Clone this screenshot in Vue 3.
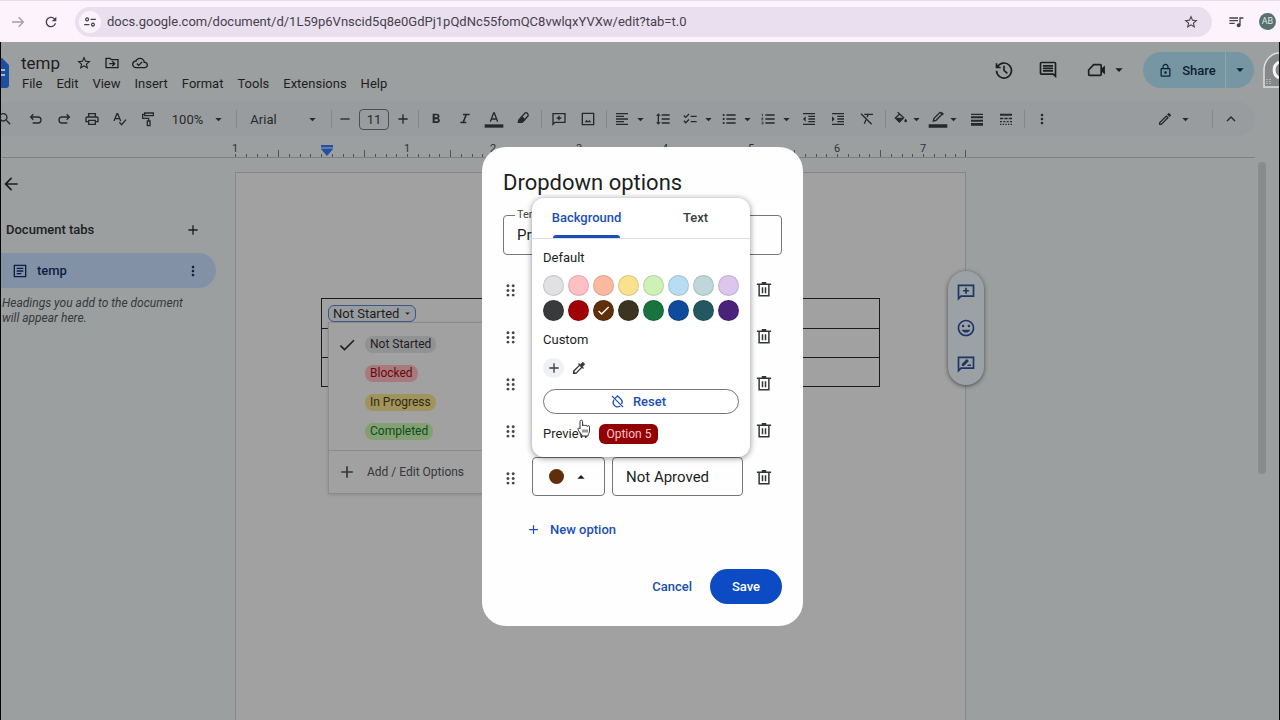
<script setup>
import { h, ref } from 'vue'

// solid shapes, 24x24 grid
const fills = {
  add: 'M19 13h-6v6h-2v-6H5v-2h6V5h2v6h6v2z',
  remove: 'M19 13H5v-2h14v2z',
  back: 'M20 11H7.83l5.59-5.59L12 4l-8 8 8 8 1.41-1.41L7.83 13H20v-2z',
  check: 'M9 16.17L4.83 12l-1.42 1.41L9 19 21 7l-1.41-1.41z',
  down: 'M1 7l11 11L23 7z',
  up: 'M1 17L12 6l11 11z',
  more: 'M12 8c1.1 0 2-.9 2-2s-.9-2-2-2-2 .9-2 2 .9 2 2 2zm0 2c-1.1 0-2 .9-2 2s.9 2 2 2 2-.9 2-2-.9-2-2-2zm0 6c-1.1 0-2 .9-2 2s.9 2 2 2 2-.9 2-2-.9-2-2-2z',
  search: 'M15.5 14h-.79l-.28-.27C15.41 12.59 16 11.11 16 9.5 16 5.91 13.09 3 9.5 3S3 5.91 3 9.5 5.91 16 9.5 16c1.61 0 3.09-.59 4.23-1.57l.27.28v.79l5 4.99L20.49 19l-4.99-5zm-6 0C7.01 14 5 11.99 5 9.5S7.01 5 9.5 5 14 7.01 14 9.5 11.99 14 9.5 14z',
  print: 'M19 8h-1V3H6v5H5c-1.66 0-3 1.34-3 3v6h4v4h12v-4h4v-6c0-1.66-1.34-3-3-3zM8 5h8v3H8V5zm8 12v2H8v-4h8v2zm2-2v-2H6v2H4v-4c0-.55.45-1 1-1h14c.55 0 1 .45 1 1v4h-2z',
  star: 'M22 9.24l-7.19-.62L12 2 9.19 8.63 2 9.24l5.46 4.73L5.82 21 12 17.27 18.18 21l-1.63-7.03L22 9.24zM12 15.4l-3.76 2.27 1-4.28-3.32-2.88 4.38-.38L12 6.1l1.71 4.04 4.38.38-3.32 2.88 1 4.28L12 15.4z',
  cloud: 'M19.35 10.04C18.67 6.59 15.64 4 12 4 9.11 4 6.6 5.64 5.35 8.04 2.34 8.36 0 10.91 0 14c0 3.31 2.69 6 6 6h13c2.76 0 5-2.24 5-5 0-2.64-2.05-4.78-4.65-4.96zM19 18H6c-2.21 0-4-1.79-4-4s1.79-4 4-4h.71C7.37 7.69 9.48 6 12 6c3.04 0 5.5 2.46 5.5 5.5v.5H19c1.66 0 3 1.34 3 3s-1.34 3-3 3zm-9-3.82l-2.09-2.09L6.5 13.5 10 17l6.01-6.01-1.41-1.41z',
  comment: 'M21.99 4c0-1.1-.89-2-1.99-2H4c-1.1 0-2 .9-2 2v12c0 1.1.9 2 2 2h14l4 4-.01-18zM20 4v13.17L18.83 16H4V4h16zM6 12h12v2H6zm0-3h12v2H6zm0-3h12v2H6z',
  camera: 'M17 10.5l4.5-4v11l-4.5-4z',
  lock: 'M18 8h-1V6c0-2.76-2.24-5-5-5S7 3.24 7 6v2H6c-1.1 0-2 .9-2 2v10c0 1.1.9 2 2 2h12c1.1 0 2-.9 2-2V10c0-1.1-.9-2-2-2zM9 6c0-1.66 1.34-3 3-3s3 1.34 3 3v2H9V6zm9 14H6V10h12v10zm-6-3c1.1 0 2-.9 2-2s-.9-2-2-2-2 .9-2 2 .9 2 2 2z',
  image: 'M7 17l3-4 2.2 2.6L14 13.5l3 3.5z',
  align: 'M15 15H3v2h12v-2zm0-8H3v2h12V7zM3 13h18v-2H3v2zm0 8h18v-2H3v2zM3 3v2h18V3H3z',
  spacing: 'M6 7h2.5L5 3.5 1.5 7H4v10H1.5L5 20.5 8.5 17H6V7zm4-2v2h12V5H10zm0 14h12v-2H10v2zm0-6h12v-2H10v2z',
  checklist: 'M22 7h-9v2h9V7zm0 8h-9v2h9v-2zM5.54 11L2 7.46l1.41-1.41 2.12 2.12 4.24-4.24 1.41 1.41L5.54 11zm0 8L2 15.46l1.41-1.41 2.12 2.12 4.24-4.24 1.41 1.41L5.54 19z',
  bullets: 'M4 10.5c-.83 0-1.5.67-1.5 1.5s.67 1.5 1.5 1.5 1.5-.67 1.5-1.5-.67-1.5-1.5-1.5zm0-6c-.83 0-1.5.67-1.5 1.5S3.17 7.5 4 7.5 5.5 6.83 5.5 6 4.83 4.5 4 4.5zm0 12c-.83 0-1.5.68-1.5 1.5s.68 1.5 1.5 1.5 1.5-.68 1.5-1.5-.67-1.5-1.5-1.5zM8 19h14v-2H8v2zm0-6h14v-2H8v2zm0-8v2h14V5H8z',
  numbers: 'M2 17h2v.5H3v1h1v.5H2v1h3v-4H2v1zm1-9h1V4H2v1h1v3zm-1 3h1.8L2 13.1v.9h3v-1H3.2L5 10.9V10H2v1zm6-6v2h14V5H8zm0 14h14v-2H8v2zm0-6h14v-2H8v2z',
  outdent: 'M11 17h10v-2H11v2zm-8-5l4 4V8l-4 4zm0 9h18v-2H3v2zM3 3v2h18V3H3zm8 6h10V7H11v2zm0 4h10v-2H11v2z',
  indent: 'M3 21h18v-2H3v2zM3 8v8l4-4-4-4zm8 9h10v-2H11v2zM3 3v2h18V3H3zm8 6h10V7H11v2zm0 4h10v-2H11v2z',
  bold: 'M15.6 10.79c.97-.67 1.65-1.77 1.65-2.79 0-2.26-1.75-4-4-4H7v14h7.04c2.09 0 3.71-1.7 3.71-3.79 0-1.52-.86-2.82-2.15-3.42zM10 6.5h3c.83 0 1.5.67 1.5 1.5s-.67 1.5-1.5 1.5h-3v-3zm3.5 9H10v-3h3.5c.83 0 1.5.67 1.5 1.5s-.67 1.5-1.5 1.5z',
  italic: 'M9 4v2.5h3.2L8.3 16H5v2.5h9V16h-3.1l3.9-9.5H19V4z',
  textColor: 'M-2 20h28v5H-2z',
  marker: 'M11 8l5 5-5.500 5H5.500L5 15z',
  fill: 'M5.2 10L5 12l4 4h2l4-6zM19 11.5s-2 2.170-2 3.500a2 2 0 0 0 4 0c0-1.330-2-3.500-2-3.500z',
  border: 'M-2 20h28v5H-2zM17.500 1l3.500 3.500-2 2L15.500 3z',
  lines: 'M3 4h18v2H3zM3 8h18v3H3zM3 13h18v3H3zM3 18h18v4H3z',
  dashes: 'M3 4h18v3H3zM3 10h5v2.5H3zM9.5 10h5v2.5h-5zM16 10h5v2.5h-5zM3 15h3v2H3zM8 15h3v2H8zM13 15h3v2h-3zM18 15h3v2h-3zM3 19h2v2H3zM7 19h2v2H7zM11 19h2v2h-2zM15 19h2v2h-2zM19 19h2v2h-2z',
  edit: 'M14.06 9.02l.92.92L5.92 19H5v-.92l9.06-9.06M17.66 3c-.25 0-.51.1-.7.29l-1.83 1.83 3.75 3.75 1.83-1.83c.39-.39.39-1.02 0-1.41l-2.34-2.34c-.2-.2-.45-.29-.71-.29zm-3.6 3.19L3 17.25V21h3.75L17.81 9.94l-3.75-3.75z',
  smile: 'M11.99 2C6.47 2 2 6.48 2 12s4.47 10 9.99 10C17.52 22 22 17.52 22 12S17.52 2 11.99 2zM12 20c-4.42 0-8-3.58-8-8s3.58-8 8-8 8 3.58 8 8-3.58 8-8 8zm3.5-9c.83 0 1.5-.67 1.5-1.5S16.33 8 15.5 8 14 8.67 14 9.5s.67 1.5 1.5 1.5zm-7 0c.83 0 1.5-.67 1.5-1.5S9.33 8 8.5 8 7 8.67 7 9.5 7.67 11 8.5 11zm3.5 6.5c2.33 0 4.31-1.46 5.11-3.5H6.89c.8 2.04 2.78 3.5 5.11 3.5z',
  suggest: 'M7 14.5V12l6-6 2.5 2.5-6 6zM13 14.5l2-2h3v2z',
  reload: 'M17.65 6.35C16.2 4.9 14.21 4 12 4c-4.42 0-7.99 3.58-7.99 8s3.57 8 7.99 8c3.73 0 6.84-2.55 7.73-6h-2.08c-.82 2.33-3.04 4-5.65 4-3.31 0-6-2.69-6-6s2.69-6 6-6c1.66 0 3.14.69 4.22 1.78L13 11h7V4l-2.35 2.35z',
  queue: 'M15 5H2v2h13V5zm0 4H2v2h13V9zM2 15h8v-2H2v2zM17 5v9.18c-.31-.11-.65-.18-1-.18-1.66 0-3 1.34-3 3s1.34 3 3 3 3-1.34 3-3V7h4V5h-6z',
  dropper: 'M20.71 5.63l-2.34-2.34c-.39-.39-1.02-.39-1.41 0l-3.12 3.12-1.93-1.91-1.41 1.41 1.42 1.42L3 16.25V21h4.75l8.92-8.92 1.42 1.42 1.41-1.41-1.92-1.92 3.12-3.12c.4-.4.4-1.03.01-1.42zM6.92 19L5 17.08l8.06-8.06 1.92 1.92L6.92 19z',
  drag: 'M5 4a2.500 2.500 0 1 0 .1 0zM14 4a2.500 2.500 0 1 0 .1 0zM5 12a2.500 2.500 0 1 0 .1 0zM14 12a2.500 2.500 0 1 0 .1 0zM5 20a2.500 2.500 0 1 0 .1 0zM14 20a2.500 2.500 0 1 0 .1 0z',
}

// line shapes, 24x24 grid
const strokes = {
  forward: 'M3 12h17M13 5l7 7-7 7',
  tune: 'M7 5a2.500 2.500 0 1 0 .1 0zM13 7.500h9M17 14a2.500 2.500 0 1 0 .1 0zM2 16.500h9',
  move: 'M3 5h6l2 2h10v12H3zM8 13h7M12.500 9.500L16 13l-3.500 3.500',
  undo: 'M8 5L4 9l4 4M4.500 9H15a4.500 4.500 0 0 1 0 9H7',
  redo: 'M16 5l4 4-4 4M19.500 9H9a4.500 4.500 0 0 0 0 9h8',
  spell: 'M3 15L7.500 4h1L13 15M4.500 11.500h7M11 17l3.500 3.500L21 13',
  roller: 'M7 3h13v4H7zM7 5H4v6h9v4M11 15h4v7h-4z',
  history: 'M3 4v5h5M4 8.500A9 9 0 1 1 3 13M12 7v5.500l4 3.500',
  camera: 'M8 5.500h8a1 1 0 0 1 1 1v11a1 1 0 0 1-1 1H3a1 1 0 0 1-1-1V12z',
  addComment: 'M3 20V4h18v13H6zM12 7v7M8.500 10.500h7',
  image: 'M3.500 3.500h17v17h-17z',
  textColor: 'M6.500 16L11.500 3h1L17.500 16M8 12h8',
  marker: 'M6 13l9-10c2-2 6 2 4.500 4.500l-9 9.500H5z',
  clear: 'M3 4l16 16M8 5h13M14 5l-2 4.500M10.500 13L8 19',
  fill: 'M7 2l9 8-6.500 6.500L3.500 10.500 10 4.500',
  border: 'M5 15l1-4 9-9 3 3-9 9z',
  collapse: 'M6 15l6-6 6 6',
  suggest: 'M3 20V4h18v13H6z',
  doc: 'M3.500 3.500h17v17h-17zM7 8h10M7 12h10M7 16h7',
  trash: 'M5.500 6v15h13V6M2.500 5.500h19M9 3.500h6M10 9.500v8M14 9.500v8',
  noColor: 'M3 3l18 18M8 7l4-4 5.500 5.500c2 2 2.500 5 1 7.500M6.500 9c-3 4-1.500 10 4 11.500 2 .4 4 0 6-1.500',
}

const Icon = ({ name }) =>
  h('svg', { class: 'icon', viewBox: '0 0 24 24', 'aria-hidden': 'true' }, [
    fills[name] && h('path', { d: fills[name], fill: 'currentColor' }),
    strokes[name] && h('path', { d: strokes[name], fill: 'none', stroke: 'currentColor', 'stroke-width': 2 }),
  ])
Icon.props = ['name']

const url = ref('docs.google.com/document/d/1L59p6Vnscid5q8e0GdPj1pQdNc55fomQC8vwlqxYVXw/edit?tab=t.0')
const fontSize = ref('11')
const templateName = ref('Project status')

const menus = ['File', 'Edit', 'View', 'Insert', 'Format', 'Tools', 'Extensions', 'Help']

const statuses = [
  { label: 'Not Started', tone: 'grey' },
  { label: 'Blocked', tone: 'red' },
  { label: 'In Progress', tone: 'yellow' },
  { label: 'Completed', tone: 'green' },
]

const options = ref([
  { label: 'Not Started', color: '#e0e0e0' },
  { label: 'Blocked', color: '#ffc0c4' },
  { label: 'In Progress', color: '#f8e08c' },
  { label: 'Completed', color: '#cdf0b4' },
  { label: 'Not Aproved', color: '#5f2e0b' },
])

const swatches = [
  '#e0e1e2', '#ffc0c4', '#fcb9a0', '#f9e28e', '#cdf1b7', '#b8ddf2', '#bfd6db', '#dcc6ee',
  '#383a3c', '#a00006', '#5f2e0b', '#3b3421', '#17743e', '#0f4a9d', '#235860', '#4b2279',
]
const selected = '#5f2e0b'

// eighth-of-an-inch marks, the zero sits one inch in
const eighth = 43 / 4
const ticks = Array.from({ length: 69 }, (_, i) => ({
  x: Math.min(Math.round(i * eighth), 730),
  tall: i % 8 === 4,
  label: i % 8 === 0 && i !== 8 ? Math.abs(i / 8 - 1) : '',
}))
</script>

<template>
  <div class="window">
    <div class="browser">
      <button class="nav faint" aria-label="Forward"><Icon name="forward" /></button>
      <button class="nav" aria-label="Reload"><Icon name="reload" /></button>
      <div class="omnibox">
        <button class="site" aria-label="Site information"><Icon name="tune" /></button>
        <input v-model="url" class="url" aria-label="Address" />
        <button class="nav" aria-label="Bookmark"><Icon name="star" /></button>
      </div>
      <button class="nav" aria-label="Media"><Icon name="queue" /></button>
      <span class="avatar">AB</span>
    </div>

    <div class="docs">
      <header class="header">
        <svg class="logo" viewBox="0 0 8 30"><path d="M0 0h1l7 7v20a3 3 0 0 1-3 3H0z" fill="#1c4f9e" /><path d="M0 12h4M0 17h4" stroke="#a9b9d3" stroke-width="2" /></svg>
        <div class="naming">
          <div class="title-row">
            <span class="doc-name">temp</span>
            <button aria-label="Star"><Icon name="star" /></button>
            <button aria-label="Move"><Icon name="move" /></button>
            <button aria-label="Saved to Drive"><Icon name="cloud" /></button>
          </div>
          <nav class="menus">
            <button v-for="m in menus" :key="m">{{ m }}</button>
          </nav>
        </div>
        <div class="header-actions">
          <button aria-label="History"><Icon name="history" /></button>
          <button aria-label="Comments"><Icon name="comment" /></button>
          <button class="meet" aria-label="Meet"><Icon name="camera" /><Icon name="down" class="caret" /></button>
          <div class="share">
            <button class="share-main"><Icon name="lock" />Share</button>
            <button class="share-more" aria-label="Share options"><Icon name="down" class="caret" /></button>
          </div>
          <svg class="widget" viewBox="0 0 16 36"><path d="M16 1C8 1 1 9 1 18v17h15" fill="#858788" stroke="#dfe0e0" stroke-width="1.500" /><path d="M16 10a9 9 0 0 0 0 16" fill="none" stroke="#f4f4f4" stroke-width="3" /><path d="M4 27v5M7 27v5" stroke="#dfe0e0" stroke-dasharray="1 1" /></svg>
        </div>
      </header>

      <div class="toolbar" role="toolbar">
        <button class="search" aria-label="Search"><Icon name="search" /></button>
        <div class="group compact">
          <button v-for="n in ['undo', 'redo', 'print', 'spell', 'roller']" :key="n" :aria-label="n"><Icon :name="n" /></button>
        </div>
        <button class="zoom-level">100%<Icon name="down" class="caret" /></button>
        <i class="sep"></i>
        <button class="font-name">Arial<Icon name="down" class="caret" /></button>
        <i class="sep"></i>
        <button class="step" aria-label="Smaller"><Icon name="remove" /></button>
        <input v-model="fontSize" class="font-size" aria-label="Font size" />
        <button class="step" aria-label="Larger"><Icon name="add" /></button>
        <i class="sep"></i>
        <div class="group">
          <button v-for="n in ['bold', 'italic', 'textColor', 'marker']" :key="n" :aria-label="n"><Icon :name="n" /></button>
        </div>
        <i class="sep"></i>
        <div class="group">
          <button v-for="n in ['addComment', 'image']" :key="n" :aria-label="n"><Icon :name="n" /></button>
        </div>
        <i class="sep"></i>
        <div class="group">
          <button class="combo" aria-label="Align"><Icon name="align" /><Icon name="down" class="caret" /></button>
          <button aria-label="Line spacing"><Icon name="spacing" /></button>
          <button v-for="n in ['checklist', 'bullets', 'numbers']" :key="n" class="combo" :aria-label="n"><Icon :name="n" /><Icon name="down" class="caret" /></button>
          <button v-for="n in ['outdent', 'indent', 'clear']" :key="n" :aria-label="n"><Icon :name="n" /></button>
        </div>
        <i class="sep"></i>
        <div class="group">
          <button v-for="n in ['fill', 'border']" :key="n" class="combo tight" :aria-label="n"><Icon :name="n" /><Icon name="down" class="caret" /></button>
          <button v-for="n in ['lines', 'dashes']" :key="n" :aria-label="n"><Icon :name="n" /></button>
        </div>
        <i class="sep"></i>
        <div class="group">
          <button aria-label="More"><Icon name="more" /></button>
        </div>
        <button class="mode" aria-label="Editing mode"><Icon name="edit" /><Icon name="down" class="caret" /></button>
        <i class="sep"></i>
        <button class="collapse" aria-label="Hide the menus"><Icon name="collapse" /></button>
      </div>

      <div class="ruler">
        <svg class="scale" viewBox="0 0 731 22">
          <g v-for="t in ticks" :key="t.x">
            <rect :x="t.x" :y="t.tall ? 14 : 18" width="1" :height="t.tall ? 7 : 3" fill="#515455" />
            <text v-if="t.label" :x="t.x" y="16" text-anchor="middle">{{ t.label }}</text>
          </g>
          <path d="M86 9h12v4l-6 7-6-7z" fill="#2250a3" />
          <path d="M86 12h12" stroke="#a0a5b0" />
        </svg>
      </div>

      <div class="workspace">
        <aside class="sidebar">
          <button class="back" aria-label="Close tabs"><Icon name="back" /></button>
          <div class="tabs-head">
            <h2>Document tabs</h2>
            <button aria-label="Add tab"><Icon name="add" /></button>
          </div>
          <div class="tab">
            <Icon name="doc" />
            <span>temp</span>
            <button aria-label="Tab options"><Icon name="more" /></button>
          </div>
          <p>Headings you add to the document will appear here.</p>
        </aside>

        <main class="canvas">
          <div class="paper">
            <table class="grid">
              <tbody>
                <tr>
                  <td>
                    <div class="anchor">
                      <button class="chip">Not Started<Icon name="down" class="caret" /></button>
                      <div class="menu">
                        <ul>
                          <li v-for="(s, i) in statuses" :key="s.label">
                            <span class="mark"><Icon v-if="i === 0" name="check" /></span>
                            <span class="pill" :class="s.tone">{{ s.label }}</span>
                          </li>
                        </ul>
                        <button class="edit-options"><Icon name="add" />Add / Edit Options</button>
                      </div>
                    </div>
                  </td>
                </tr>
                <tr><td></td></tr>
                <tr><td></td></tr>
              </tbody>
            </table>
            <div class="quick">
              <button aria-label="Add comment"><Icon name="addComment" /></button>
              <button aria-label="Add emoji"><Icon name="smile" /></button>
              <button aria-label="Suggest edits"><Icon name="suggest" /></button>
            </div>
          </div>
          <span class="thumb"></span>
        </main>
      </div>
    </div>

    <div class="overlay">
      <form class="dialog" role="dialog" aria-label="Dropdown options" @submit.prevent>
        <h1>Dropdown options</h1>
        <fieldset class="field">
          <legend><label for="template">Template</label></legend>
          <input id="template" v-model="templateName" />
        </fieldset>

        <div class="options">
          <div v-for="(o, i) in options" :key="i" class="option">
            <Icon name="drag" class="drag" />
            <button type="button" class="color" aria-label="Color">
              <span class="dot" :style="{ background: o.color }"></span>
              <Icon name="up" class="caret" />
            </button>
            <input v-model="o.label" :aria-label="'Option ' + (i + 1)" />
            <button type="button" class="trash" aria-label="Delete option"><Icon name="trash" /></button>
          </div>
        </div>

        <button type="button" class="new-option"><Icon name="add" />New option</button>
        <div class="actions">
          <button type="button" class="cancel">Cancel</button>
          <button class="save">Save</button>
        </div>

        <div class="popup">
          <div class="popup-tabs">
            <button type="button" class="active">Background</button>
            <button type="button">Text</button>
          </div>
          <div class="popup-body">
            <h3>Default</h3>
            <div class="swatches">
              <button v-for="c in swatches" :key="c" type="button" :aria-label="c" :style="{ background: c }">
                <Icon v-if="c === selected" name="check" />
              </button>
            </div>
            <h3 class="custom-title">Custom</h3>
            <div class="custom">
              <button type="button" class="plus" aria-label="Custom color"><Icon name="add" /></button>
              <button type="button" aria-label="Pick a color"><Icon name="dropper" /></button>
            </div>
            <button type="button" class="reset"><Icon name="noColor" />Reset</button>
            <div class="preview">
              <h3>Preview</h3>
              <span>Option 5</span>
            </div>
          </div>
          <svg class="pointer" viewBox="0 0 14 18"><path d="M3 10V2.500a1.300 1.300 0 0 1 2.600 0V7a1.200 1.200 0 0 1 2.300 0 1.200 1.200 0 0 1 2.300.5 1.200 1.200 0 0 1 2.300.7V12c0 2-1.500 3-1.500 5H5c0-2-3-4-4-6.500C.5 9 2 8.500 3 10zM6 10.500v3M8 10.500v3M10 10.500v3" fill="#fff" stroke="#333" /></svg>
        </div>
      </form>
    </div>
  </div>
</template>

<style>
body {
  margin: 0;
  background: #9c9fa0;
}
</style>

<style scoped>
.window {
  position: relative;
  display: flex;
  flex-direction: column;
  min-height: 100vh;
  overflow: hidden;
  font-family: Roboto, 'Liberation Sans', sans-serif;
  font-size: 13px;
  color: #1c1e20;
}

* {
  box-sizing: border-box;
}

button,
input {
  font: inherit;
  color: inherit;
  border: 0;
  padding: 0;
  background: none;
}

button {
  display: flex;
  align-items: center;
  justify-content: center;
}

h1, h2, h3, p, ul {
  margin: 0;
  padding: 0;
  font-weight: 400;
}

.icon {
  width: 18px;
  height: 18px;
  flex: none;
  overflow: visible;
}

.icon.caret {
  width: 8px;
  height: 8px;
}

/* browser bar */
.browser {
  display: flex;
  align-items: center;
  height: 42px;
  padding: 0 4px;
  background: #fdf3fd;
  border-top: 1px solid #e6dcea;
  color: #46424b;
}

.nav {
  width: 28px;
}

.nav .icon {
  width: 16px;
  height: 16px;
}

.browser > .nav {
  margin-right: 5px;
}

.faint {
  color: #a49ea8;
}

.omnibox {
  display: flex;
  align-items: center;
  flex: 1;
  height: 30px;
  margin: 0 10px 0 5px;
  padding: 0 7px 0 4px;
  border-radius: 15px;
  background: #e9dfee;
}

.site {
  width: 22px;
  height: 22px;
  margin-right: 6px;
  border-radius: 11px;
  background: #fbf3fc;
}

.site .icon {
  width: 14px;
  height: 14px;
}

.url {
  flex: 1;
}

.avatar {
  width: 17px;
  height: 17px;
  margin: 0 0 0 4px;
  border-radius: 9px;
  background: #58706f;
  color: #dfe9e8;
  font-size: 9px;
  line-height: 17px;
  text-align: center;
}

/* editor chrome */
.docs {
  display: flex;
  flex-direction: column;
  flex: 1;
  background: #9c9fa0;
  border: solid #050505;
  border-width: 0 1px;
}

.header {
  display: flex;
  height: 60px;
}

.logo {
  width: 8px;
  height: 30px;
  margin-top: 16px;
}

.naming {
  padding: 11px 0 0 12px;
}

.title-row {
  display: flex;
  align-items: center;
  gap: 12px;
  height: 20px;
}

.title-row .icon {
  width: 16px;
  height: 16px;
}

.doc-name {
  margin-right: 4px;
  font-size: 17px;
  line-height: 20px;
}

.menus {
  display: flex;
  gap: 14px;
  margin-top: 1px;
  padding-left: 1px;
}

.menus button {
  height: 18px;
}

.header-actions {
  display: flex;
  align-items: center;
  height: 36px;
  margin: 10px 0 0 auto;
}

.header-actions > button {
  width: 44px;
}

.header-actions .icon {
  width: 20px;
  height: 20px;
}

.header-actions .icon.caret {
  width: 8px;
  height: 8px;
}

.header-actions > .meet {
  width: 60px;
  gap: 8px;
  padding-left: 10px;
}

.share {
  display: flex;
  height: 36px;
  margin: 0 9px 0 13px;
  border-radius: 18px;
  background: #7796a4;
  color: #0b2232;
  overflow: hidden;
}

.share-main {
  width: 82px;
  gap: 9px;
  padding-left: 6px;
  font-weight: 500;
}

.share-main .icon {
  width: 15px;
  height: 15px;
}

.share-more {
  width: 29px;
  border-left: 1px solid #8fa5af;
}

.widget {
  width: 16px;
  height: 36px;
}

.toolbar {
  display: flex;
  align-items: center;
  height: 34px;
  margin-right: 24px;
  border-radius: 0 17px 17px 0;
  background: #999c9e;
  color: #26292b;
}

.toolbar button {
  height: 28px;
  flex: none;
}

.toolbar .icon {
  width: 16px;
  height: 16px;
}

.toolbar .icon.caret {
  width: 7px;
  height: 7px;
}

.search {
  width: 21px;
  justify-content: flex-end;
  padding-right: 9px;
}

.group {
  display: flex;
}

.group button {
  width: 29px;
}

.compact button {
  width: 28px;
}

.group .combo {
  width: 39px;
  gap: 7px;
}

.group .tight {
  width: 37px;
  gap: 4px;
}

.zoom-level {
  width: 70px;
  gap: 12px;
}

.font-name {
  width: 88px;
  gap: 32px;
}

.sep {
  width: 1px;
  height: 18px;
  margin: 0 2px 0 4px;
  background: #85888a;
}

.step {
  width: 22px;
}

.font-size {
  width: 30px;
  height: 21px;
  margin: 0 3px;
  border: 1px solid #4d5051;
  border-radius: 4px;
  text-align: center;
}

.mode {
  width: 52px;
  gap: 9px;
  margin-left: auto;
}

.mode + .sep {
  margin: 0 4px 0 13px;
}

.collapse {
  width: 28px;
  margin-right: 10px;
}

.ruler {
  height: 22px;
  margin-right: 24px;
  padding-left: 234px;
  border-bottom: 1px solid #7f8283;
}

.scale {
  display: block;
  width: 731px;
  height: 22px;
  overflow: visible;
  font-size: 11px;
  fill: #303234;
}

/* document area */
.workspace {
  display: flex;
  flex: 1;
}

.sidebar {
  width: 234px;
  flex: none;
  padding-top: 16px;
}

.back .icon {
  width: 20px;
  height: 20px;
}

.tabs-head {
  display: flex;
  align-items: center;
  justify-content: space-between;
  margin-top: 26px;
  padding: 0 34px 0 5px;
}

.tabs-head h2 {
  font-size: 13px;
  line-height: 20px;
  font-weight: 500;
}

.tabs-head .icon,
.tab .icon {
  width: 16px;
  height: 16px;
}

.tab {
  display: flex;
  align-items: center;
  height: 35px;
  margin: 13px 19px 0 0;
  padding: 0 15px 0 11px;
  border-radius: 0 18px 18px 0;
  background: #8391a7;
  color: #0b1f44;
  font-weight: 500;
}

.tab span {
  flex: 1;
  padding-left: 9px;
}

.sidebar p {
  padding: 8px 48px 0 1px;
  font-size: 12px;
  line-height: 15px;
  font-style: italic;
  color: #35393b;
}

.canvas {
  display: flex;
  flex: 1;
  justify-content: space-between;
  padding: 4px 13px 0 0;
}

.paper {
  position: relative;
  width: 731px;
  margin-top: 10px;
  padding: 125px 85px 0;
  border: 1px solid #858788;
  border-bottom: 0;
  background: #a1a1a1;
}

.thumb {
  width: 8px;
  height: 312px;
  border-radius: 4px;
  background: #898c8d;
}

.grid {
  width: 100%;
  border-collapse: collapse;
}

.grid td {
  height: 29px;
  padding: 0 6px;
  border: 1px solid #1b1b1b;
}

.grid tr:first-child td {
  height: 30px;
}

.anchor {
  position: relative;
  width: max-content;
}

.chip {
  height: 17px;
  gap: 6px;
  padding: 0 5px 0 4px;
  border: 1px solid #3c5788;
  border-radius: 6px;
  background: #989b9f;
}

.chip .icon.caret {
  width: 5px;
  height: 5px;
}

.menu {
  position: absolute;
  top: 17px;
  left: 0;
  width: 220px;
  border: 1px solid #8c8c8c;
  background: #a1a1a1;
  box-shadow: 0 1px 3px #77777780;
  font-size: 12px;
}

.menu ul {
  padding: 7px 0 4px;
  list-style: none;
}

.menu li {
  display: flex;
  align-items: center;
  height: 29px;
}

.mark {
  display: flex;
  width: 36px;
  padding-left: 8px;
}

.mark .icon {
  width: 20px;
  height: 20px;
}

.pill {
  height: 17px;
  padding: 0 5px;
  border-radius: 8px;
  line-height: 17px;
}

.grey {
  background: #919293;
}

.red {
  background: #a77a7c;
  color: #6d0510;
}

.yellow {
  background: #a1935c;
  color: #30290f;
}

.green {
  background: #83a072;
  color: #0e4a20;
}

.edit-options {
  width: 100%;
  height: 43px;
  justify-content: flex-start;
  gap: 10px;
  padding-left: 8px;
  border-top: 1px solid #8c8c8c;
  color: #34373a;
}

.edit-options .icon {
  width: 20px;
  height: 20px;
}

.quick {
  position: absolute;
  top: 98px;
  right: -19px;
  display: flex;
  flex-direction: column;
  justify-content: space-around;
  width: 36px;
  height: 114px;
  padding: 3px 0;
  border-radius: 18px;
  background: #9ba1a5;
  box-shadow: 0 1px 4px #4a4c4e;
  color: #1d3565;
}

.quick .icon {
  width: 20px;
  height: 20px;
}

/* dialog */
.overlay {
  position: absolute;
  inset: 0;
  display: flex;
  align-items: center;
  justify-content: center;
  padding: 53px 0 0 5px;
}

.dialog {
  position: relative;
  width: 321px;
  padding: 22px 21px;
  border-radius: 24px;
  background: #fefefe;
}

.dialog h1 {
  padding-top: 1px;
  font-size: 22px;
  line-height: 26px;
}

.field {
  height: 46px;
  min-width: 0;
  margin: 13px 0 0;
  padding: 0 13px;
  border: 1px solid #747775;
  border-radius: 4px;
}

.field legend {
  padding: 0 2px;
  margin-left: -2px;
  font-size: 11px;
  line-height: 12px;
  color: #444746;
}

.field input {
  width: 100%;
  height: 28px;
  font-size: 15px;
}

.options {
  display: flex;
  flex-direction: column;
  gap: 8px;
  margin-top: 14px;
}

.option {
  display: flex;
  align-items: center;
  height: 39px;
}

.icon.drag {
  width: 14px;
  height: 14px;
  margin: 0 13px 0 2px;
  color: #444746;
}

.color {
  width: 73px;
  height: 39px;
  gap: 13px;
  padding-right: 3px;
  border: 1px solid #747775;
  border-radius: 4px;
}

.dot {
  width: 15px;
  height: 15px;
  border-radius: 8px;
}

.option input {
  width: 131px;
  height: 39px;
  margin-left: 7px;
  padding: 0 13px;
  border: 1px solid #747775;
  border-radius: 4px;
  font-size: 15px;
}

.trash {
  margin-left: 12px;
  color: #333635;
}

.new-option {
  height: 32px;
  gap: 9px;
  margin: 17px 0 0 23px;
  color: #1c50b4;
  font-weight: 500;
}

.new-option .icon {
  width: 15px;
  height: 15px;
}

.actions {
  display: flex;
  justify-content: flex-end;
  gap: 18px;
  margin-top: 24px;
  font-weight: 500;
}

.cancel {
  color: #1c4fa6;
}

.save {
  width: 72px;
  height: 35px;
  border-radius: 18px;
  background: #0c4bc4;
  color: #fff;
}

/* colour picker */
.popup {
  position: absolute;
  top: 51px;
  left: 50px;
  width: 218px;
  height: 259px;
  border-radius: 12px;
  background: #fff;
  box-shadow: 0 1px 6px #00000073;
}

.popup-tabs {
  display: flex;
  height: 41px;
  border-bottom: 1px solid #dcdedf;
}

.popup-tabs button {
  position: relative;
  flex: 1;
  padding-bottom: 1px;
  color: #3a3d3f;
  font-weight: 500;
}

.popup-tabs .active {
  color: #1c4fb0;
}

.active::after {
  content: '';
  position: absolute;
  right: 21px;
  bottom: 0;
  left: 21px;
  height: 3px;
  border-radius: 3px 3px 0 0;
  background: #1c4fb0;
}

.popup-body {
  padding: 9px 11px;
}

.popup-body h3 {
  font-size: 13px;
  line-height: 20px;
}

.swatches {
  display: grid;
  grid-template-columns: repeat(8, 21px);
  gap: 4px;
  margin-top: 7px;
}

.swatches button {
  height: 21px;
  border: 1px solid #00000020;
  border-radius: 11px;
  color: #fff;
}

.swatches .icon {
  width: 15px;
  height: 15px;
}

.popup-body .custom-title {
  margin-top: 9px;
}

.custom {
  display: flex;
  gap: 4px;
  margin-top: 8px;
  color: #3a3d3f;
}

.custom button {
  width: 21px;
  height: 20px;
  border-radius: 10px;
}

.custom .plus {
  background: #f0f1f5;
}

.custom .icon {
  width: 16px;
  height: 16px;
}

.reset {
  width: 100%;
  height: 25px;
  gap: 8px;
  margin-top: 11px;
  padding-right: 6px;
  border: 1px solid #747775;
  border-radius: 13px;
  color: #1c4fb0;
  font-weight: 500;
}

.reset .icon {
  width: 15px;
  height: 15px;
}

.preview {
  display: flex;
  gap: 11px;
  margin-top: 10px;
}

.preview span {
  height: 20px;
  padding: 0 7px;
  border-radius: 6px;
  background: #920004;
  color: #ffc3c6;
  font-size: 12px;
  line-height: 20px;
}

.pointer {
  position: absolute;
  top: 221px;
  left: 45px;
  width: 14px;
  height: 18px;
}
</style>
